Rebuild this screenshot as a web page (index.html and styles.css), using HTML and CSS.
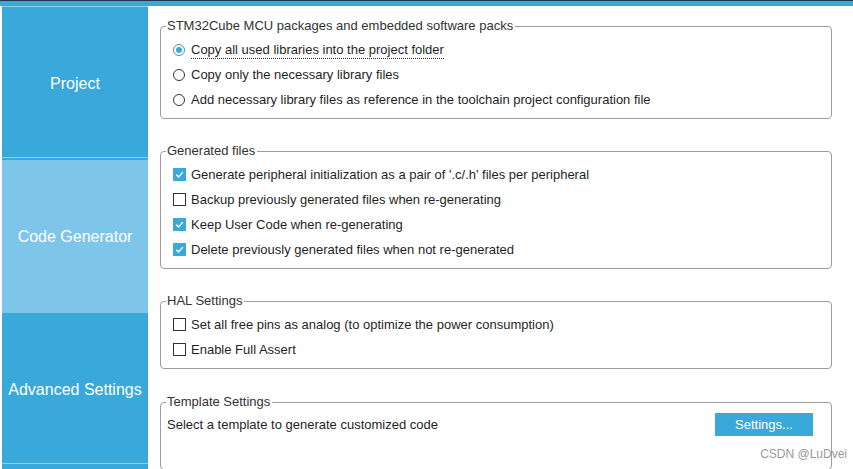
FILE: index.html
```html
<!DOCTYPE html>
<html>
<head>
<meta charset="utf-8">
<link rel="stylesheet" href="styles.css">
</head>
<body>
<div class="topbar"></div>
<div class="main">
  <nav class="sidebar">
    <div class="tab tab-project"><span>Project</span></div>
    <div class="tab-sep"></div>
    <div class="tab tab-active"><span>Code Generator</span></div>
    <div class="tab tab-adv"><span>Advanced Settings</span></div>
    <div class="tab-rest"></div>
  </nav>
  <div class="content">
    <fieldset class="group g1">
      <legend>STM32Cube MCU packages and embedded software packs</legend>
      <div class="row"><span class="radio on"></span><span class="label focus">Copy all used libraries into the project folder</span></div>
      <div class="row"><span class="radio"></span><span class="label">Copy only the necessary library files</span></div>
      <div class="row"><span class="radio"></span><span class="label">Add necessary library files as reference in the toolchain project configuration file</span></div>
    </fieldset>
    <fieldset class="group g2">
      <legend>Generated files</legend>
      <div class="row"><span class="check on"><svg viewBox="0 0 12 12"><path d="M2.5 6.2 L5 8.6 L9.6 3.4" fill="none" stroke="#fff" stroke-width="1.6"/></svg></span><span class="label">Generate peripheral initialization as a pair of '.c/.h' files per peripheral</span></div>
      <div class="row"><span class="check"></span><span class="label">Backup previously generated files when re-generating</span></div>
      <div class="row"><span class="check on"><svg viewBox="0 0 12 12"><path d="M2.5 6.2 L5 8.6 L9.6 3.4" fill="none" stroke="#fff" stroke-width="1.6"/></svg></span><span class="label">Keep User Code when re-generating</span></div>
      <div class="row"><span class="check on"><svg viewBox="0 0 12 12"><path d="M2.5 6.2 L5 8.6 L9.6 3.4" fill="none" stroke="#fff" stroke-width="1.6"/></svg></span><span class="label">Delete previously generated files when not re-generated</span></div>
    </fieldset>
    <fieldset class="group g3">
      <legend>HAL Settings</legend>
      <div class="row"><span class="check"></span><span class="label">Set all free pins as analog (to optimize the power consumption)</span></div>
      <div class="row"><span class="check"></span><span class="label">Enable Full Assert</span></div>
    </fieldset>
    <fieldset class="group g4">
      <legend>Template Settings</legend>
      <div class="trow">
        <span class="ttext">Select a template to generate customized code</span>
        <button class="btn">Settings...</button>
      </div>
    </fieldset>
  </div>
</div>
<div class="watermark">CSDN @LuDvei</div>
</body>
</html>
```
FILE: styles.css
```css
html, body {
  margin: 0;
  padding: 0;
  background: #fff;
  height: 469px;
  overflow: hidden;
}
body {
  font-family: "Liberation Sans", Arial, sans-serif;
  color: #1f1f1f;
  position: relative;
}
.topbar {
  height: 5px;
  background: #39a8db;
  border-top: 1px solid #1d3550;
}
.main {
  display: flex;
}
.sidebar {
  width: 146px;
  margin-left: 2px;
  display: flex;
  flex-direction: column;
  background: #39a8db;
}
.tab {
  display: flex;
  align-items: center;
  justify-content: center;
  color: #fff;
  font-size: 16px;
  background: #39a8db;
  box-sizing: border-box;
}
.tab-project {
  height: 151px;
  border-top: 1px solid #8fd1ef;
  padding-top: 3px;
}
.tab-sep {
  height: 2px;
  border-top: 1px solid #8fd1ef;
}
.tab-active {
  height: 153px;
  background: #7dc6ea;
  padding-top: 0;
}
.tab-adv {
  height: 150px;
  padding-top: 3px;
}
.tab-rest {
  height: 6px;
  border-top: 1px solid #8fd1ef;
}
.content {
  flex: 1;
  padding: 13px 21px 0 12px;
  display: flex;
  flex-direction: column;
  gap: 25px;
}
.group {
  margin: 0;
  border: 1px solid #9a9ea3;
  border-radius: 4px;
  padding: 4px 10px 6px 12px;
  min-width: 0;
}
.group legend {
  font-size: 13px;
  line-height: 14px;
  color: #333;
  padding: 0 2px 0 1px;
  margin-left: -7px;
}
.row {
  height: 25px;
  display: flex;
  align-items: center;
  font-size: 13px;
}
.radio {
  width: 10px;
  height: 10px;
  border: 1px solid #333;
  border-radius: 50%;
  margin-right: 6px;
  position: relative;
  flex: none;
}
.radio.on {
  border-color: #4f8cb6;
}
.radio.on::after {
  content: "";
  position: absolute;
  left: 2px;
  top: 2px;
  width: 6px;
  height: 6px;
  border-radius: 50%;
  background: #39a8db;
}
.check {
  width: 11px;
  height: 11px;
  border: 1px solid #333;
  margin-right: 5px;
  flex: none;
  display: flex;
}
.check.on {
  border-color: #39a8db;
  background: #39a8db;
}
.check svg {
  width: 11px;
  height: 11px;
}
.label.focus {
  border-bottom: 1px dotted #333;
  padding-bottom: 1px;
  margin-top: 2px;
}
.g4 {
  margin-top: 1px;
  padding-bottom: 33px;
  padding-right: 17px;
}
.trow {
  display: flex;
  align-items: center;
  justify-content: space-between;
  margin-top: 0;
  font-size: 13px;
}
.ttext {
  margin-left: -6px;
}
.btn {
  width: 98px;
  height: 23px;
  margin-right: 1px;
  background: #39a8db;
  color: #fff;
  border: none;
  font-family: "Liberation Sans", Arial, sans-serif;
  font-size: 13px;
  padding: 0;
}
.watermark {
  position: absolute;
  right: 6px;
  bottom: 8px;
  font-size: 12px;
  color: #9a9a9a;
}
```
